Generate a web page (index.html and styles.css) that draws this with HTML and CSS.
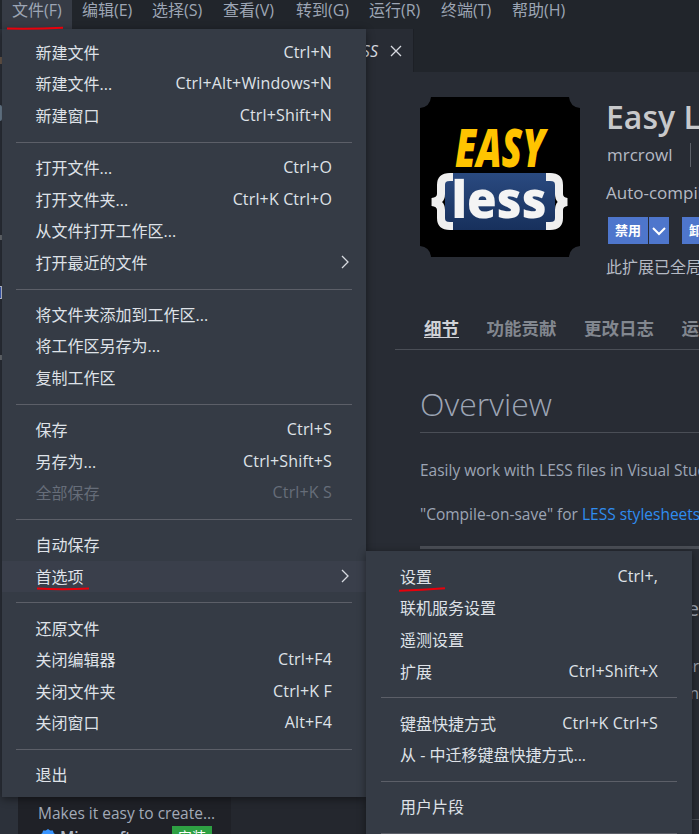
FILE: index.html
```html
<!DOCTYPE html>
<html lang="zh-CN">
<head>
<meta charset="utf-8">
<title>Easy LESS</title>
<link rel="stylesheet" href="styles.css">
</head>
<body>
<div class="app">
  <header class="menubar">
    <span class="top-item active">文件(F)</span>
    <span class="top-item">编辑(E)</span>
    <span class="top-item">选择(S)</span>
    <span class="top-item">查看(V)</span>
    <span class="top-item">转到(G)</span>
    <span class="top-item">运行(R)</span>
    <span class="top-item">终端(T)</span>
    <span class="top-item">帮助(H)</span>
  </header>
  <div class="workbench">
    <aside class="activity">
      <i class="ab ab-brown"></i>
      <i class="ab ab-round"></i>
      <i class="ab ab-dot"></i>
      <i class="ab ab-blue"></i>
      <i class="ab ab-end"></i>
    </aside>
    <aside class="sidebar">
      <div class="ext-item">
        <div class="ext-desc">Makes it easy to create...</div>
        <div class="ext-meta">
          <span class="ext-pub">
            <svg class="verified" viewBox="0 0 16 16" width="16" height="16"><path fill="#3794ff" d="M8 0l2.2 1.6 2.7-.1.8 2.6 2.2 1.6L15.1 8l.8 2.3-2.2 1.6-.8 2.6-2.7-.1L8 16l-2.2-1.6-2.7.1-.8-2.6L.1 10.3.9 8 .1 5.700l2.200-1.600.8-2.600 2.700.1z"/></svg>
            Microsoft
          </span>
          <span class="install">安装</span>
        </div>
      </div>
    </aside>
    <main class="editor">
      <div class="tabbar">
        <div class="tab">
          <span class="tab-label">Extension: Easy LESS</span>
          <svg class="tab-close" viewBox="0 0 12 12" width="12" height="12"><path d="M1 1l10 10M11 1L1 11" stroke="#d7dae0" stroke-width="1.300" fill="none"/></svg>
        </div>
      </div>
      <div class="ext-view">
        <section class="ext-head">
          <svg class="logo" viewBox="0 0 160 160" width="160" height="160">
            <defs>
              <linearGradient id="navy" x1="0" y1="0" x2="0" y2="1"><stop offset="0" stop-color="#2a4a80"/><stop offset="1" stop-color="#17305c"/></linearGradient>
            </defs>
            <path fill="#000" d="M11 0H149Q150 10 160 11V149Q150 150 149 160H11Q10 150 0 149V11Q10 10 11 0Z"/>
            <text class="logo-easy" x="80" y="70" text-anchor="middle" textLength="90" lengthAdjust="spacingAndGlyphs">EASY</text>
            <rect x="25" y="76" width="110" height="57" rx="5" fill="url(#navy)"/>
            <path class="brace" d="M33 80H30Q21 80 21 88V97Q21 104 12 105Q21 106 21 113V121Q21 129 30 129H33"/>
            <path class="brace" d="M126 80H130Q139 80 139 88V97Q139 104 147 105Q139 106 139 113V121Q139 129 130 129H126"/>
            <text class="logo-less" x="79" y="121" text-anchor="middle" textLength="95" lengthAdjust="spacingAndGlyphs">less</text>
          </svg>
          <div class="ext-info">
            <h1 class="ext-title">Easy LESS</h1>
            <div class="ext-author"><span>mrcrowl</span><i class="vbar"></i><span>1,000,000</span></div>
            <div class="ext-summary">Auto-compile LESS to CSS on save</div>
            <div class="ext-actions">
              <span class="btn">禁用</span>
              <span class="btn btn-drop"><svg viewBox="0 0 16 16" width="16" height="16"><path d="M2 5l6 6 6-6" stroke="#fff" stroke-width="2" fill="none"/></svg></span>
              <span class="btn btn-next">卸载</span>
            </div>
            <div class="ext-status">此扩展已全局启用</div>
          </div>
        </section>
        <nav class="ext-tabs">
          <span class="ext-tab current">细节</span>
          <span class="ext-tab">功能贡献</span>
          <span class="ext-tab">更改日志</span>
          <span class="ext-tab">运行状态</span>
        </nav>
        <article class="readme">
          <h2 class="overview">Overview</h2>
          <p class="para para-first">Easily work with LESS files in Visual Studio Code.</p>
          <p class="para">"Compile-on-save" for <a class="link">LESS stylesheets</a> without using a build task.</p>
          <hr class="thick">
          <p class="tail tail-a">Features and settings here</p>
          <p class="tail tail-b">Compiles less files for your server</p>
          <p class="tail tail-c">Supports autoprefix and main option</p>
          <hr class="thin">
        </article>
      </div>
    </main>
  </div>

  <div class="menu file-menu">
    <div class="row"><span>新建文件</span><span>Ctrl+N</span></div>
    <div class="row"><span>新建文件...</span><span>Ctrl+Alt+Windows+N</span></div>
    <div class="row"><span>新建窗口</span><span>Ctrl+Shift+N</span></div>
    <div class="sep"></div>
    <div class="row"><span>打开文件...</span><span>Ctrl+O</span></div>
    <div class="row"><span>打开文件夹...</span><span>Ctrl+K Ctrl+O</span></div>
    <div class="row"><span>从文件打开工作区...</span></div>
    <div class="row has-sub"><span>打开最近的文件</span><svg class="chev" viewBox="0 0 10 14" width="10" height="14"><path d="M2 1l6 6-6 6" stroke="#d7dae0" stroke-width="1.300" fill="none"/></svg></div>
    <div class="sep"></div>
    <div class="row"><span>将文件夹添加到工作区...</span></div>
    <div class="row"><span>将工作区另存为...</span></div>
    <div class="row"><span>复制工作区</span></div>
    <div class="sep"></div>
    <div class="row"><span>保存</span><span>Ctrl+S</span></div>
    <div class="row"><span>另存为...</span><span>Ctrl+Shift+S</span></div>
    <div class="row disabled"><span>全部保存</span><span>Ctrl+K S</span></div>
    <div class="sep"></div>
    <div class="row"><span>自动保存</span></div>
    <div class="row has-sub hover"><span>首选项</span><svg class="chev" viewBox="0 0 10 14" width="10" height="14"><path d="M2 1l6 6-6 6" stroke="#d7dae0" stroke-width="1.300" fill="none"/></svg></div>
    <div class="sep"></div>
    <div class="row"><span>还原文件</span></div>
    <div class="row"><span>关闭编辑器</span><span>Ctrl+F4</span></div>
    <div class="row"><span>关闭文件夹</span><span>Ctrl+K F</span></div>
    <div class="row"><span>关闭窗口</span><span>Alt+F4</span></div>
    <div class="sep"></div>
    <div class="row"><span>退出</span></div>
  </div>

  <div class="menu sub-menu">
    <div class="row"><span>设置</span><span>Ctrl+,</span></div>
    <div class="row"><span>联机服务设置</span></div>
    <div class="row"><span>遥测设置</span></div>
    <div class="row"><span>扩展</span><span>Ctrl+Shift+X</span></div>
    <div class="sep"></div>
    <div class="row"><span>键盘快捷方式</span><span>Ctrl+K Ctrl+S</span></div>
    <div class="row"><span>从 - 中迁移键盘快捷方式...</span></div>
    <div class="sep"></div>
    <div class="row"><span>用户片段</span></div>
    <div class="sep"></div>
  </div>

  <svg class="ink ink-file" viewBox="0 0 58 4" width="58" height="4"><path d="M1 2.500Q28 3 57 1.800" stroke="#e8000b" stroke-width="2" fill="none"/></svg>
  <svg class="ink ink-prefs" viewBox="0 0 54 4" width="54" height="4"><path d="M1 1.500Q26 3 53 1.500" stroke="#e8000b" stroke-width="2" fill="none"/></svg>
  <svg class="ink ink-settings" viewBox="0 0 48 5" width="48" height="5"><path d="M1 3.800Q24 3 47 1.200" stroke="#e8000b" stroke-width="2" fill="none"/></svg>
</div>
</body>
</html>
```
FILE: styles.css
```css
* { box-sizing: border-box; }
html, body { margin: 0; padding: 0; background: #282c34; }
body { font-family: "Open Sans", "Noto Sans CJK SC", sans-serif; }

.app {
  position: relative;
  width: 699px;
  height: 834px;
  overflow: hidden;
  display: flex;
  flex-direction: column;
  color: #9da5b4;
}

/* title / menu bar */
.menubar {
  height: 29px;
  flex: none;
  display: grid;
  grid-template-columns: 70px 70px 71px 73px 73px 72px 71px auto;
  justify-content: start;
  padding-left: 2px;
  background: #21252b;
  font-size: 16px;
  line-height: 21px;
}
.top-item { padding: 0 0 0 10px; white-space: nowrap; color: #9da5b4; }
.top-item.active { background: #363b45; }

/* workbench */
.workbench { flex: 1; min-height: 0; display: flex; }

.activity {
  width: 18px;
  flex: none;
  background: #2c313a;
  display: flex;
  flex-direction: column;
}
.ab { display: block; width: 2px; flex: none; }
.ab-brown { height: 7px; margin-top: 28px; background: #6b5a4d; }
.ab-round { height: 16px; margin-top: 41px; background: #6f8396; border-radius: 0 6px 6px 0; }
.ab-dot { height: 5px; margin-top: 114px; background: #6d7177; }
.ab-blue { height: 13px; margin-top: 46px; background: #3f62c4; border: 1px solid #cfd4e4; border-left: 0; }
.ab-end { height: 5px; margin-top: 56px; background: #6d7177; }

.sidebar {
  width: 213px;
  flex: none;
  background: #21252b;
  display: flex;
  flex-direction: column;
  justify-content: flex-end;
}
.ext-item { height: 37px; overflow: hidden; padding: 5px 19px 0 20px; background: #1f2127; font-size: 15.500px; flex: none; }
.ext-desc { line-height: 22px; color: #a2aab8; white-space: nowrap; }
.ext-meta { display: flex; align-items: center; justify-content: space-between; margin-top: 2px; }
.ext-pub { display: flex; align-items: center; gap: 4px; color: #b0b6c3; font-weight: 600; margin-left: 2px; }
.verified { flex: none; }
.install { background: #2ea043; color: #fff; font-size: 14px; width: 40px; text-align: center; line-height: 22px; }

.editor { flex: 1; min-width: 0; display: flex; flex-direction: column; }
.tabbar { height: 43px; flex: none; background: #21252b; display: flex; }
.tab {
  width: 183px;
  background: #282c34;
  border-right: 1px solid #1d2026;
  display: flex;
  align-items: center;
  justify-content: flex-end;
  padding-right: 11px;
  gap: 12px;
}
.tab-label { font-style: italic; font-size: 16px; color: #d7dae0; white-space: nowrap; }
.tab-close { flex: none; }

.ext-view {
  flex: 1;
  min-height: 0;
  background: linear-gradient(to right, #24272e 135px, #282c34 135px);
  padding-top: 25px;
  overflow: hidden;
}

.ext-head { display: flex; padding-left: 189px; gap: 26px; width: 900px; }
.logo { flex: none; display: block; }
.logo-easy { font-family: "Open Sans", sans-serif; font-weight: 800; font-style: italic; font-size: 53px; fill: #ffc400; }
.logo-less { font-family: "Open Sans", sans-serif; font-weight: 800; font-size: 52px; fill: #f4f4f4; }
.brace { fill: none; stroke: #efefef; stroke-width: 8; }

.ext-info { min-width: 0; white-space: nowrap; }
.ext-title { margin: 0; font-size: 32px; font-weight: 600; line-height: 40px; color: #c8c9cb; }
.ext-author { display: flex; align-items: center; gap: 18px; margin-top: 5px; font-size: 17px; line-height: 26px; color: #b5bac4; padding-left: 1px; }
.vbar { width: 1px; height: 24px; background: #5c6068; }
.ext-summary { margin-top: 13px; font-size: 17px; line-height: 24px; color: #b5bac4; }
.ext-actions { display: flex; margin-top: 12px; padding-left: 2px; }
.btn { background: #4e76cc; color: #fff; height: 27px; width: 40px; line-height: 27px; text-align: center; font-size: 13px; font-weight: 700; }
.btn-drop { width: 20px; margin-left: 1px; display: flex; align-items: center; justify-content: center; }
.btn-next { margin-left: 13px; }
.ext-status { margin-top: 10px; font-size: 16px; line-height: 26px; color: #b5bac4; }

.ext-tabs {
  margin: 25px 0 0 164px;
  height: 45px;
  border-bottom: 1px solid #4a4e56;
  display: flex;
  gap: 27.500px;
  padding-left: 29px;
  padding-top: 10px;
  font-size: 17.500px;
  font-weight: 700;
  line-height: 26px;
  white-space: nowrap;
  overflow: hidden;
}
.ext-tab { color: #82878f; flex: none; }
.ext-tab.current { color: #d0d2d6; text-decoration: underline; text-underline-offset: 2px; }

.readme { padding-left: 189px; width: 900px; }
.overview {
  margin: 31px 0 0;
  height: 52px;
  font-size: 32px;
  font-weight: 300;
  line-height: 46px;
  color: #9da5b4;
  border-bottom: 1px solid #4a4e56;
}
.para { margin: 23px 0 0; font-size: 15.500px; line-height: 21px; color: #9da5b4; white-space: nowrap; }
.para-first { margin-top: 27px; }
.link { color: #2f8cf0; }
.thick { border: 0; height: 3px; background: #4a4e56; margin: 20.500px 0 0; }
.tail { margin: 0; width: 279px; text-align: right; white-space: nowrap; color: #9da5b4; }
.tail-a { margin-top: 46px; font-size: 20px; line-height: 28px; }
.tail-b { margin-top: 33.500px; font-size: 15.500px; line-height: 21px; }
.tail-c { margin-top: 6px; font-size: 15.500px; line-height: 21px; }
.thin { border: 0; height: 1px; background: #4a4e56; margin: 114.500px 0 0; }

/* dropdown menus */
.menu {
  position: absolute;
  background: #353b45;
  box-shadow: 0 2px 8px rgba(0, 0, 0, .45);
  font-size: 16px;
  color: #dfe2e8;
}
.file-menu { left: 2px; top: 29px; width: 364px; height: 768px; padding-top: 8px; }
.sub-menu { left: 366px; top: 551px; width: 326px; height: 300px; padding-top: 10px; }

.row {
  height: 31.600px;
  padding: 0 34px 2px;
  display: flex;
  align-items: center;
  justify-content: space-between;
  white-space: nowrap;
}
.file-menu .row { padding-left: 33.500px; }
.row span + span { letter-spacing: .15px; }
.file-menu .row.has-sub { padding-right: 16px; }
.row.hover { background: #3a3f4b; }
.row.disabled { color: #666d79; }
.chev { flex: none; }
.sep { height: 1px; margin: 10px 14px 9.400px; background: #5c5f68; }
.sub-menu .sep { margin-left: 15px; margin-right: 15px; }

/* hand-drawn annotations */
.ink { position: absolute; display: block; }
.ink-file { left: 6px; top: 26px; }
.ink-prefs { left: 36px; top: 587px; }
.ink-settings { left: 398px; top: 587px; }
```
